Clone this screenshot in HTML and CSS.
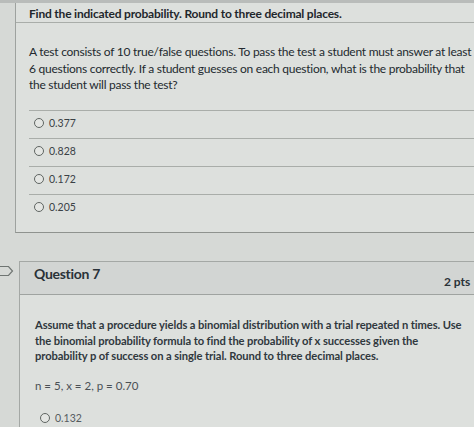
FILE: index.html
```html
<!DOCTYPE html>
<html>
<head>
<meta charset="utf-8">
<link rel="stylesheet" href="styles.css">
</head>
<body>
<div class="topband"></div>
<section class="card card1">
  <div class="title">Find the indicated probability. Round to three decimal places.</div>
  <p class="text">A test consists of 10 true/false questions. To pass the test a student must answer at least<br>6 questions correctly. If a student guesses on each question, what is the probability that<br>the student will pass the test?</p>
  <ul class="answers">
    <li><span class="radio"></span>0.377</li>
    <li><span class="radio"></span>0.828</li>
    <li><span class="radio"></span>0.172</li>
    <li><span class="radio"></span>0.205</li>
  </ul>
</section>
<section class="card card2">
  <svg class="flag" width="14" height="12" viewBox="0 0 14 12"><path d="M-2 1.5 H8.5 L12.5 6 L8.5 10.5 H-2" fill="none" stroke="#6f7572" stroke-width="1.2"/></svg>
  <header class="qhead">
    <span class="qname">Question 7</span>
    <span class="pts">2 pts</span>
  </header>
  <div class="qbody">
    <p class="text">Assume that a procedure yields a binomial distribution with a trial repeated n times. Use<br>the binomial probability formula to find the probability of x successes given the<br>probability p of success on a single trial. Round to three decimal places.</p>
    <p class="given">n = 5, x = 2, p = 0.70</p>
    <ul class="answers answers2">
      <li><span class="radio"></span>0.132</li>
    </ul>
  </div>
</section>
</body>
</html>
```
FILE: styles.css
```css
html, body {
  margin: 0;
  padding: 0;
  background: #d6d9d6;
  font-family: Lato, "Open Sans", sans-serif;
  color: #2a3238;
  overflow: hidden;
  height: 427px;
}
.topband {
  height: 3px;
  background: #b9bcba;
}
.card {
  background: #dde0dd;
  width: 520px;
}
.card1 {
  margin-left: 15px;
  border-left: 1px solid #9ea29f;
  border-bottom: 1px solid #8f938f;
  padding: 3px 0 0 13px;
  height: 226px;
}
.title {
  font-weight: 700;
  font-size: 12px;
  letter-spacing: -0.2px;
  line-height: 16px;
  border-bottom: 1px solid #a9ada9;
  margin-left: -13px;
  padding-left: 13px;
  height: 16px;
  color: #1f272c;
}
.text {
  margin: 0;
  white-space: nowrap;
}
.card1 .text {
  margin-top: 21px;
  font-size: 12px;
  letter-spacing: -0.26px;
  line-height: 16.5px;
  color: #232a2f;
}
.answers {
  list-style: none;
  margin: 16px 0 0 0;
  padding: 0;
}
.answers li {
  display: flex;
  align-items: center;
  height: 28px;
  border-top: 1px solid #a9ada9;
  font-size: 10.5px;
  padding-left: 5px;
  box-sizing: border-box;
  padding-bottom: 3px;
  color: #3a4146;
}
.radio {
  width: 8px;
  height: 8px;
  border: 1px solid #5f6562;
  border-radius: 50%;
  margin-right: 5px;
  background: #e4e6e3;
}
.card2 {
  position: relative;
  margin-top: 28px;
  margin-left: 19px;
  border-left: 1px solid #a4a8a5;
  border-top: 1px solid #a4a8a5;
  height: 200px;
}
.flag {
  position: absolute;
  left: -20px;
  top: 3px;
}
.qhead {
  display: flex;
  align-items: flex-start;
  background: #d2d5d3;
  border-bottom: 1px solid #9fa3a0;
  height: 33px;
  padding: 3px 0 0 14px;
  box-sizing: border-box;
}
.qname {
  font-weight: 700;
  font-size: 14px;
  letter-spacing: -0.3px;
  line-height: 18px;
}
.pts {
  font-weight: 700;
  font-size: 12px;
  margin-top: 9px;
  margin-left: 344px;
}
.qbody {
  padding: 22px 0 0 15px;
}
.qbody .text {
  font-weight: 700;
  font-size: 11.2px;
  letter-spacing: -0.1px;
  line-height: 15.5px;
  color: #30383d;
}
.given {
  margin: 15px 0 0 0;
  font-size: 11.5px;
  color: #4a5055;
}
.answers2 {
  margin-top: 14px;
}
.answers2 li {
  border-top: none;
  color: #555b5f;
  padding-left: 5px;
}
```
